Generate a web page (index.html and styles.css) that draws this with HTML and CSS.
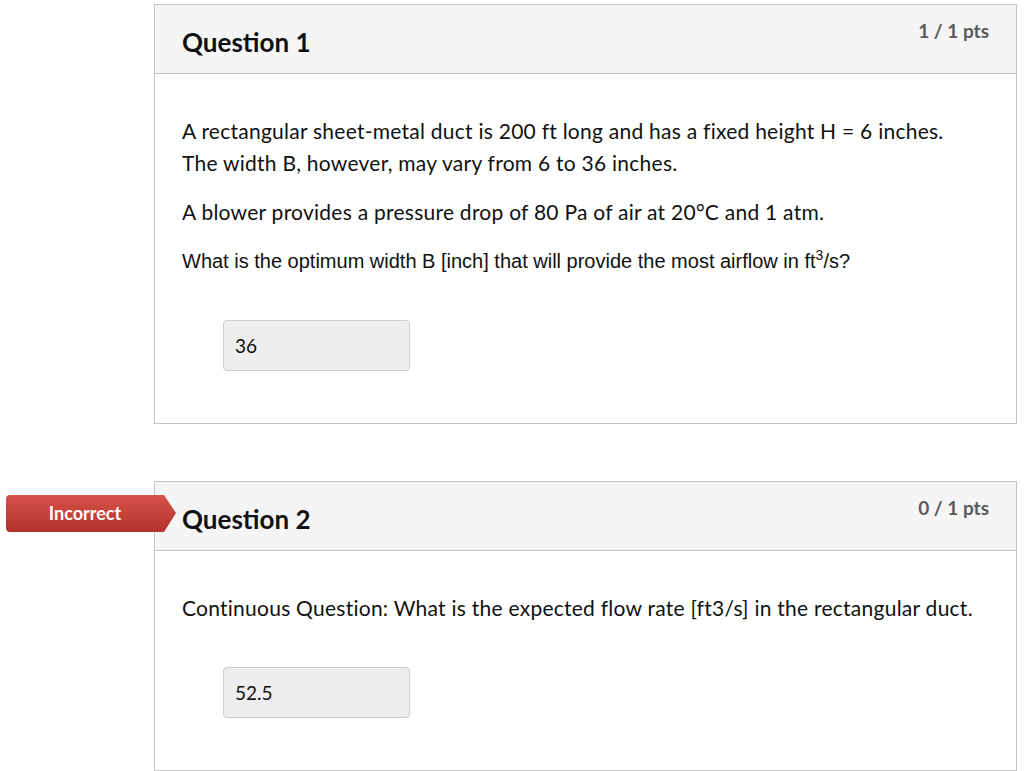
FILE: index.html
```html
<!DOCTYPE html>
<html>
<head>
<meta charset="utf-8">
<link rel="stylesheet" href="styles.css">
</head>
<body>
<div class="page">
  <div class="question">
    <div class="q-header">
      <h2 class="q-title">Question 1</h2>
      <div class="q-pts">1 / 1 pts</div>
    </div>
    <div class="q-body q-body-1">
      <p class="q-text">A rectangular sheet-metal duct is 200 ft long and has a fixed height H = 6 inches. The width B, however, may vary from 6 to 36 inches.</p>
      <p class="q-text">A blower provides a pressure drop of 80 Pa of air at 20°C and 1 atm.</p>
      <p class="q-arial">What is the optimum width B [inch] that will provide the most airflow in ft<sup>3</sup>/s?</p>
      <div class="answer answer-1">36</div>
    </div>
  </div>

  <div class="question q2">
    <div class="badge">Incorrect</div>
    <div class="q-header">
      <h2 class="q-title">Question 2</h2>
      <div class="q-pts">0 / 1 pts</div>
    </div>
    <div class="q-body q-body-2">
      <p class="q-text">Continuous Question: What is the expected flow rate [ft3/s] in the rectangular duct.</p>
      <div class="answer answer-2">52.5</div>
    </div>
  </div>
</div>
</body>
</html>
```

FILE: styles.css
```css
html, body {
  margin: 0;
  padding: 0;
  background: #ffffff;
}
body {
  font-family: Lato, "Open Sans", sans-serif;
  color: #111;
}
.page {
  padding: 4px 0 0 154px;
  width: 863px;
}
.question {
  position: relative;
  border: 1px solid #c4c4c4;
  box-sizing: border-box;
  width: 863px;
  height: 420px;
  background: #fff;
}
.q2 {
  margin-top: 57px;
  height: 290px;
}
.q-header {
  background: #f5f5f5;
  border-bottom: 1px solid #c4c4c4;
  height: 68px;
  display: flex;
  justify-content: space-between;
  align-items: flex-start;
  padding: 0 27px 0 27px;
}
.q-title {
  margin: 0;
  padding-top: 22px;
  font-size: 26px;
  line-height: 30px;
  font-weight: 700;
  color: #111;
}
.q-pts {
  padding-top: 15px;
  font-size: 19px;
  line-height: 22px;
  font-weight: 700;
  color: #5a5a5a;
}
.q-body {
  padding: 41px 27px 0 27px;
}
.q-body-1 {
  padding-right: 45px;
}
.q-body-2 {
  padding-top: 41px;
  padding-right: 20px;
}
.q-text {
  margin: 0 0 17px 0;
  font-size: 21px;
  letter-spacing: 0.25px;
  line-height: 32px;
  color: #111;
}
.q-arial {
  margin: 0;
  font-family: "Liberation Sans", Arial, sans-serif;
  font-size: 20px;
  line-height: 32px;
  color: #111;
}
.q-arial sup {
  font-size: 14px;
  line-height: 0;
}
.answer {
  margin-left: 41px;
  width: 187px;
  height: 51px;
  box-sizing: border-box;
  background: #eeeeee;
  border: 1px solid #cdcdcd;
  border-radius: 4px;
  font-size: 19px;
  line-height: 49px;
  padding-left: 11px;
  color: #111;
}
.answer-1 {
  margin-top: 43px;
}
.answer-2 {
  margin-top: 43px;
}
.badge {
  position: absolute;
  left: -149px;
  top: 13px;
  width: 170px;
  height: 37px;
  box-sizing: border-box;
  padding-right: 12px;
  background: linear-gradient(#d6524a, #b3322b);
  clip-path: polygon(0 3px, 1px 1px, 3px 0, 158px 0, 170px 18px, 158px 37px, 3px 37px, 1px 36px, 0 34px);
  color: #fff;
  font-size: 18px;
  font-weight: 700;
  line-height: 37px;
  text-align: center;
}
```
